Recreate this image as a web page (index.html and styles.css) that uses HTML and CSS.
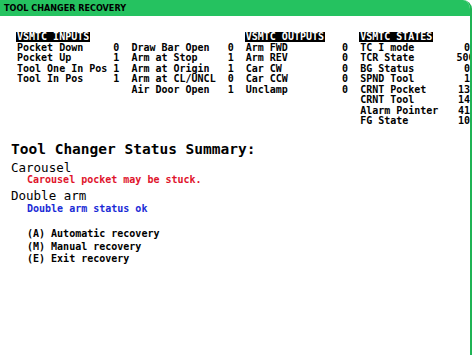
FILE: index.html
```html
<!DOCTYPE html>
<html lang="en">
<head>
    <meta charset="UTF-8">
    <title>Tool Changer Recovery</title>
    <link rel="stylesheet" href="styles.css">
</head>
<body>
    <div class="frame">
        <div class="titlebar">TOOL CHANGER RECOVERY</div>

        <div class="io">
            <div class="col">
                <div class="head"><span>VSMTC INPUTS</span></div>
                <div class="row"><span class="lbl">Pocket Down</span><span class="val">0</span></div>
                <div class="row"><span class="lbl">Pocket Up</span><span class="val">1</span></div>
                <div class="row"><span class="lbl">Tool One In Pos</span><span class="val">1</span></div>
                <div class="row"><span class="lbl">Tool In Pos</span><span class="val">1</span></div>
            </div>
            <div class="col">
                <div class="head"></div>
                <div class="row"><span class="lbl">Draw Bar Open</span><span class="val">0</span></div>
                <div class="row"><span class="lbl">Arm at Stop</span><span class="val">1</span></div>
                <div class="row"><span class="lbl">Arm at Origin</span><span class="val">1</span></div>
                <div class="row"><span class="lbl">Arm at CL/UNCL</span><span class="val">0</span></div>
                <div class="row"><span class="lbl">Air Door Open</span><span class="val">1</span></div>
            </div>
            <div class="col">
                <div class="head"><span>VSMTC OUTPUTS</span></div>
                <div class="row"><span class="lbl">Arm FWD</span><span class="val">0</span></div>
                <div class="row"><span class="lbl">Arm REV</span><span class="val">0</span></div>
                <div class="row"><span class="lbl">Car CW</span><span class="val">0</span></div>
                <div class="row"><span class="lbl">Car CCW</span><span class="val">0</span></div>
                <div class="row"><span class="lbl">Unclamp</span><span class="val">0</span></div>
            </div>
            <div class="col states">
                <div class="head"><span>VSMTC STATES</span></div>
                <div class="row"><span class="lbl">TC I mode</span><span class="val">0</span></div>
                <div class="row"><span class="lbl">TCR State</span><span class="val">500</span></div>
                <div class="row"><span class="lbl">BG Status</span><span class="val">0</span></div>
                <div class="row"><span class="lbl">SPND Tool</span><span class="val">1</span></div>
                <div class="row"><span class="lbl">CRNT Pocket</span><span class="val">13</span></div>
                <div class="row"><span class="lbl">CRNT Tool</span><span class="val">14</span></div>
                <div class="row"><span class="lbl">Alarm Pointer</span><span class="val">41</span></div>
                <div class="row"><span class="lbl">FG State</span><span class="val">10</span></div>
            </div>
        </div>

        <div class="summary">
            <div class="sum-title">Tool Changer Status Summary:</div>
            <div class="group first">Carousel</div>
            <div class="msg error">Carousel pocket may be stuck.</div>
            <div class="group">Double arm</div>
            <div class="msg ok">Double arm status ok</div>
            <div class="options">
                <div class="msg">(A) Automatic recovery</div>
                <div class="msg">(M) Manual recovery</div>
                <div class="msg">(E) Exit recovery</div>
            </div>
        </div>
    </div>
</body>
</html>
```

FILE: styles.css
```css
body {
    margin: 0;
    background-color: #fff;
    color: #000;
    font-family: "DejaVu Sans Mono", monospace;
}
.frame {
    width: 472px;
    height: 355px;
    box-sizing: border-box;
    border-right: 2px solid #1fb455;
    border-top-right-radius: 9px;
    overflow: hidden;
}
.titlebar {
    height: 16px;
    box-sizing: border-box;
    padding: 1px 0 0 4px;
    line-height: 15px;
    background-color: #25c260;
    font-family: "DejaVu Sans Condensed", "DejaVu Sans", sans-serif;
    font-stretch: condensed;
    font-weight: bold;
    font-size: 9px;
    white-space: nowrap;
}
.io {
    display: flex;
    margin-top: 16px;
    padding-left: 17px;
    font-size: 10px;
    font-weight: bold;
    line-height: 10.5px;
}
.col {
    flex: none;
    width: 19ch;
}
.col.states {
    width: 110px;
}
.head {
    height: 10.5px;
}
.head span {
    display: inline-block;
    height: 10px;
    line-height: 10px;
    padding: 0 1px;
    margin-left: -1px;
    background-color: #000;
    color: #fff;
    white-space: nowrap;
}
.row {
    display: flex;
    height: 10.5px;
    white-space: nowrap;
}
.lbl {
    flex: none;
    width: 16ch;
}
.states .row {
    justify-content: space-between;
}
.summary {
    margin-top: 13px;
    padding-left: 11px;
}
.sum-title {
    font-size: 14.5px;
    line-height: 18px;
    font-weight: bold;
}
.group {
    font-size: 12.5px;
    line-height: 12.5px;
    margin-top: 3.7px;
}
.group.first {
    margin-top: 4px;
}
.msg {
    padding-left: 16px;
    font-size: 10px;
    line-height: 12.5px;
    font-weight: bold;
}
.error {
    color: #e0142c;
}
.ok {
    color: #1b2bd6;
}
.options {
    margin-top: 13px;
}
```
